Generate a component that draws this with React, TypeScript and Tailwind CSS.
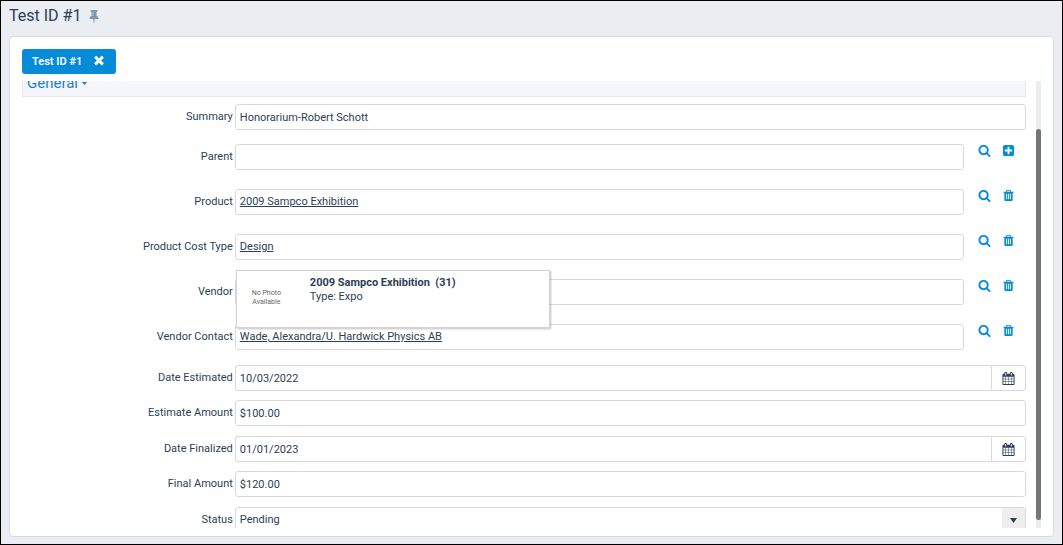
import { useLayoutEffect, useRef, useState } from 'react';
import type { ReactNode } from 'react';

const icons = {
  search:
    'M1216 832q0-185-131.5-316.5t-316.5-131.5-316.5 131.5-131.5 316.5 131.5 316.5 316.5 131.5 316.5-131.5 131.5-316.5zm512 832q0 52-38 90t-90 38q-54 0-90-38l-343-342q-179 124-399 124-143 0-273.5-55.5t-225-150-150-225-55.5-273.5 55.5-273.5 150-225 225-150 273.5-55.5 273.5 55.5 225 150 150 225 55.5 273.5q0 220-124 399l343 343q37 37 37 90z',
  trash:
    'M704 1376v-704q0-14-9-23t-23-9h-64q-14 0-23 9t-9 23v704q0 14 9 23t23 9h64q14 0 23-9t9-23zm256 0v-704q0-14-9-23t-23-9h-64q-14 0-23 9t-9 23v704q0 14 9 23t23 9h64q14 0 23-9t9-23zm256 0v-704q0-14-9-23t-23-9h-64q-14 0-23 9t-9 23v704q0 14 9 23t23 9h64q14 0 23-9t9-23zm-544-992h448l-48-117q-7-9-17-11h-317q-10 2-17 11zm928 32v64q0 14-9 23t-23 9h-96v948q0 83-47 143.5t-113 60.5h-832q-66 0-113-58.5t-47-141.5v-952h-96q-14 0-23-9t-9-23v-64q0-14 9-23t23-9h309l70-167q15-37 54-63t79-26h320q40 0 79 26t54 63l70 167h309q14 0 23 9t9 23z',
  plus:
    'M1408 960v-128q0-26-19-45t-45-19h-320v-320q0-26-19-45t-45-19h-128q-26 0-45 19t-19 45v320h-320q-26 0-45 19t-19 45v128q0 26 19 45t45 19h320v320q0 26 19 45t45 19h128q26 0 45-19t19-45v-320h320q26 0 45-19t19-45zm256-544v960q0 119-84.5 203.5t-203.5 84.5h-960q-119 0-203.5-84.5t-84.5-203.5v-960q0-119 84.5-203.5t203.5-84.5h960q119 0 203.5 84.5t84.5 203.5z',
  close:
    'M1490 1322q0 40-28 68l-136 136q-28 28-68 28t-68-28l-294-294-294 294q-28 28-68 28t-68-28l-136-136q-28-28-28-68t28-68l294-294-294-294q-28-28-28-68t28-68l136-136q28-28 68-28t68 28l294 294 294-294q28-28 68-28t68 28l136 136q28 28 28 68t-28 68l-294 294 294 294q28 28 28 68z',
  calendar:
    'M192 1664h288v-288h-288v288zm352 0h320v-288h-320v288zm-352-352h288v-320h-288v320zm352 0h320v-320h-320v320zm-352-384h288v-288h-288v288zm736 736h320v-288h-320v288zm-384-736h320v-288h-320v288zm768 736h288v-288h-288v288zm-384-352h320v-320h-320v320zm-352-864v-288q0-13-9.5-22.5t-22.5-9.5h-64q-13 0-22.5 9.5t-9.5 22.5v288q0 13 9.5 22.5t22.5 9.5h64q13 0 22.5-9.5t9.5-22.5zm736 864h288v-320h-288v320zm-384-384h320v-288h-320v288zm384 0h288v-288h-288v288zm32-480v-288q0-13-9.5-22.5t-22.5-9.5h-64q-13 0-22.5 9.5t-9.5 22.5v288q0 13 9.5 22.5t22.5 9.5h64q13 0 22.5-9.5t9.5-22.5zm384-64v1280q0 52-38 90t-90 38h-1408q-52 0-90-38t-38-90v-1280q0-52 38-90t90-38h128v-96q0-66 47-113t113-47h64q66 0 113 47t47 113v96h384v-96q0-66 47-113t113-47h64q66 0 113 47t47 113v96h128q52 0 90 38t38 90z',
  pin:
    'M800 864v-448q0-14-9-23t-23-9-23 9-9 23v448q0 14 9 23t23 9 23-9 9-23zm672 352q0 26-19 45t-45 19h-429l-51 483q-2 12-10.5 20.5t-20.5 8.5h-1q-27 0-32-27l-76-485h-404q-26 0-45-19t-19-45q0-123 78.5-221.5t177.5-98.5v-512q-52 0-90-38t-38-90 38-90 90-38h640q52 0 90 38t38 90-38 90-90 38v512q99 0 177.5 98.5t78.5 221.5z',
};

function Icon({ name, className = 'w-3.5 h-3.5' }: { name: keyof typeof icons; className?: string }) {
  return (
    <svg className={`shrink-0 ${className}`} viewBox="0 0 1792 1792" fill="currentColor" aria-hidden="true">
      <path d={icons[name]} />
    </svg>
  );
}

const box = 'w-full h-[26px] px-1 bg-white border border-[#d9d9d9] rounded-[3px] focus:outline-none';

function Row({ id, label, className, children }: { id: string; label: string; className: string; children: ReactNode }) {
  return (
    <div className={`flex items-start ${className}`}>
      <label htmlFor={id} className="w-[21%] shrink-0 leading-[26px] text-right">
        {label}
      </label>
      <div className="flex flex-1 min-w-0 ml-0.5">{children}</div>
    </div>
  );
}

function TextRow({ id, label, initial }: { id: string; label: string; initial: string }) {
  return (
    <Row id={id} label={label} className="h-[27px]">
      <input id={id} type="text" defaultValue={initial} className={box} />
    </Row>
  );
}

function DateRow({ id, label, initial }: { id: string; label: string; initial: string }) {
  return (
    <Row id={id} label={label} className="h-[26px]">
      <input
        id={id}
        type="text"
        defaultValue={initial}
        className="flex-1 min-w-0 h-[26px] px-1 bg-white border border-r-0 border-[#d9d9d9] rounded-l-[3px] focus:outline-none"
      />
      <button
        type="button"
        aria-label={`Pick ${label}`}
        className="flex items-center justify-center w-[35px] h-[26px] bg-white border border-[#d9d9d9] rounded-r-[3px]"
      >
        <Icon name="calendar" className="w-[13px] h-[13px]" />
      </button>
    </Row>
  );
}

interface LookupRowProps {
  id: string;
  label: string;
  value?: string;
  canClear?: boolean;
  children?: ReactNode;
}

function LookupRow({ id, label, value, canClear = true, children }: LookupRowProps) {
  return (
    <Row id={id} label={label} className="h-[26px]">
      <div className="relative flex-1 min-w-0">
        {value ? (
          <div className={`${box} leading-6`}>
            <a id={id} href="#record" className="underline underline-offset-1">
              {value}
            </a>
          </div>
        ) : (
          <input id={id} type="text" className={box} />
        )}
        {children}
      </div>
      <div className="flex items-start gap-[11px] pl-3.5 pr-[11px] text-[#058bd8]">
        <button type="button" aria-label={`Search ${label}`}>
          <Icon name="search" className="w-[13px] h-[13px]" />
        </button>
        <button type="button" aria-label={canClear ? `Clear ${label}` : `Add ${label}`}>
          <Icon name={canClear ? 'trash' : 'plus'} className="w-[13px] h-[13px]" />
        </button>
      </div>
    </Row>
  );
}

function RecordPreview() {
  return (
    <div className="absolute left-px top-[81px] z-10 flex w-[314px] h-[58px] bg-white border border-[#d3d3d3] shadow-[1px_1px_2px_rgba(0,0,0,0.25)]">
      <div className="w-[59px] pt-[18px] text-[7px] leading-[9px] text-center text-[#666]">
        No Photo
        <br />
        Available
      </div>
      <div className="pl-3.5 pt-[5px] leading-[14px]">
        <div className="font-bold">
          2009 Sampco Exhibition&nbsp; (31)
        </div>
        <div>Type: Expo</div>
      </div>
    </div>
  );
}

export default function App() {
  const scroller = useRef<HTMLDivElement>(null);
  const [thumb, setThumb] = useState({ top: 0, height: 100 });

  const updateThumb = () => {
    const el = scroller.current;
    if (!el) return;
    setThumb({
      top: (el.scrollTop / el.scrollHeight) * 100,
      height: (el.clientHeight / el.scrollHeight) * 100,
    });
  };

  useLayoutEffect(() => {
    if (scroller.current) scroller.current.scrollTop = 55;
    updateThumb();
  }, []);

  return (
    <div className="flex flex-col h-screen px-2 pb-[7px] bg-[#eaedf2] border border-black font-[Roboto,sans-serif] text-[11px] text-[#2b3f56]">
      <header className="flex items-center gap-1.5 h-[35px] pb-1.5">
        <h1 className="text-base">Test ID #1</h1>
        <button type="button" aria-label="Pin" className="text-[#7f97ad]">
          <Icon name="pin" />
        </button>
      </header>

      <main className="flex flex-col flex-1 min-h-0 px-3 pt-3 pb-2 bg-white border border-[#d8dce0] rounded">
        {/* Open record tab */}
        <div className="flex items-center self-start gap-2.5 h-[25px] px-2.5 mb-[7px] bg-[#058bd8] rounded-[3px] text-white font-semibold leading-[17px]">
          <span>Test ID #1</span>
          <button type="button" aria-label="Close tab" className="pb-1">
            <Icon name="close" />
          </button>
        </div>

        <div className="flex flex-1 min-h-0 gap-2.5">
          <div ref={scroller} onScroll={updateThumb} className="flex-1 min-w-0 overflow-y-auto [scrollbar-width:none]">
            <form className="pt-[43px] pb-1">
              <h2 className="flex items-center gap-1 h-7 pl-1 bg-[#f5f6fb] border border-[#e6e8ec] text-[15px] text-[#1c7fd0]">
                General
                <svg className="w-[5px] h-[3px]" viewBox="0 0 5 3" fill="currentColor" aria-hidden="true">
                  <path d="M0 0h5L2.5 3z" />
                </svg>
              </h2>

              <div className="pt-[7px]">
                <TextRow id="summary" label="Summary" initial="Honorarium-Robert Schott" />
              </div>

              {/* Lookup fields */}
              <div className="flex flex-col gap-[19px] pt-[13px] pb-[15px]">
                <LookupRow id="parent" label="Parent" canClear={false} />
                <LookupRow id="product" label="Product" value="2009 Sampco Exhibition">
                  <RecordPreview />
                </LookupRow>
                <LookupRow id="cost-type" label="Product Cost Type" value="Design" />
                <LookupRow id="vendor" label="Vendor" />
                <LookupRow id="vendor-contact" label="Vendor Contact" value="Wade, Alexandra/U. Hardwick Physics AB" />
              </div>

              <div className="flex flex-col gap-[9px]">
                <DateRow id="date-estimated" label="Date Estimated" initial="10/03/2022" />
                <TextRow id="estimate-amount" label="Estimate Amount" initial="$100.00" />
                <DateRow id="date-finalized" label="Date Finalized" initial="01/01/2023" />
                <TextRow id="final-amount" label="Final Amount" initial="$120.00" />
                <Row id="status" label="Status" className="h-[26px]">
                  <div className="relative flex-1">
                    <select id="status" className={`${box} appearance-none`}>
                      <option>Pending</option>
                    </select>
                    <span className="absolute inset-y-px right-px flex items-center justify-center w-[23px] bg-[#eee] pointer-events-none">
                      <svg className="w-[7px] h-[5px]" viewBox="0 0 7 5" fill="currentColor" aria-hidden="true">
                        <path d="M0 0h7L3.5 5z" />
                      </svg>
                    </span>
                  </div>
                </Row>
              </div>
            </form>
          </div>

          {/* Scroll track */}
          <div className="w-[5px] bg-[#ececec]">
            <div className="relative bg-[#757575] rounded-sm" style={{ top: `${thumb.top}%`, height: `${thumb.height}%` }} />
          </div>
        </div>
      </main>
    </div>
  );
}
